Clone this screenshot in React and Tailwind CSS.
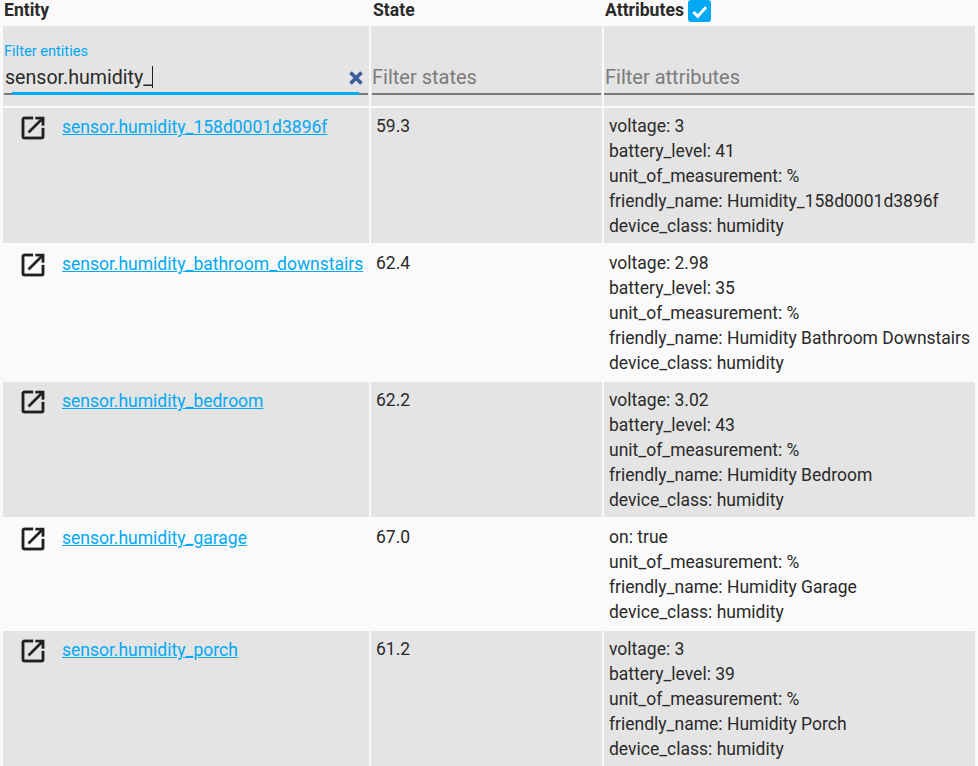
const rows = [
  { id: 'sensor.humidity_158d0001d3896f', state: '59.3', attrs: ['voltage: 3', 'battery_level: 41', 'unit_of_measurement: %', 'friendly_name: Humidity_158d0001d3896f', 'device_class: humidity'] },
  { id: 'sensor.humidity_bathroom_downstairs', state: '62.4', attrs: ['voltage: 2.98', 'battery_level: 35', 'unit_of_measurement: %', 'friendly_name: Humidity Bathroom Downstairs', 'device_class: humidity'] },
  { id: 'sensor.humidity_bedroom', state: '62.2', attrs: ['voltage: 3.02', 'battery_level: 43', 'unit_of_measurement: %', 'friendly_name: Humidity Bedroom', 'device_class: humidity'] },
  { id: 'sensor.humidity_garage', state: '67.0', attrs: ['on: true', 'unit_of_measurement: %', 'friendly_name: Humidity Garage', 'device_class: humidity'] },
  { id: 'sensor.humidity_porch', state: '61.2', attrs: ['voltage: 3', 'battery_level: 39', 'unit_of_measurement: %', 'friendly_name: Humidity Porch', 'device_class: humidity'] },
]

function OpenIcon() {
  return (
    <svg viewBox="0 0 24 24" className="w-[30px] h-[30px] -mt-[1px] shrink-0 fill-[#212121] stroke-[#212121] stroke-[0.25]">
      <path d="M14,3V5H17.59L7.76,14.83L9.17,16.24L19,6.41V10H21V3M19,19H5V5H12V3H5C3.89,3 3,3.9 3,5V19A2,2 0 0,0 5,21H19A2,2 0 0,0 21,19V12H19V19Z" />
    </svg>
  )
}

export default function App() {
  return (
    <div className="w-[978px] h-[766px] overflow-hidden bg-[#fafafa] text-[#2a2a2a] text-[17.5px] leading-[25px] font-['Roboto',sans-serif] pl-[3px]">
      <div className="grid grid-cols-[366px_231px_371px] gap-x-[2px]">
        {/* Header */}
        <div className="h-[26px] pl-[1px] font-bold text-[17.6px] leading-[21px]">Entity</div>
        <div className="h-[26px] pl-[2px] font-bold text-[17.6px] leading-[21px]">State</div>
        <div className="h-[26px] pl-[1px] font-bold text-[17.6px] leading-[21px] flex gap-[4px]">
          Attributes
          <span className="w-[23px] h-[22px] rounded-[3px] bg-[#03a9f4] flex items-center justify-center">
            <svg viewBox="0 0 24 24" className="w-[21px] h-[21px] fill-none stroke-white stroke-[3.4]">
              <path d="M5 12.5l5 5L19.5 7" />
            </svg>
          </span>
        </div>

        {/* Filters */}
        <div className="h-[80px] bg-[#e4e4e4] pt-[16px] relative">
          <div className="pl-[1px] text-[#03a9f4] text-[14.6px] leading-[18px]">Filter entities</div>
          <div className="pl-[2px] mt-[2px] h-[30px] text-[19.6px] leading-[31px] flex items-center">
            sensor.humidity_<span className="w-px h-[22px] bg-[#212121]" />
          </div>
          <div className="mt-[1px] mx-[1px] h-[2px] bg-[#7a7a7a]" />
          <div className="absolute left-[9px] w-[347px] top-[66px] h-[3px] bg-[#03a9f4]" />
          <svg viewBox="0 0 24 24" className="absolute right-[2px] top-[41px] w-[22px] h-[22px] fill-none stroke-[#3b5c9a] stroke-[4]">
            <path d="M6 6l12 12M18 6L6 18" />
          </svg>
        </div>
        <div className="h-[80px] bg-[#e4e4e4] pt-[36px] flex flex-col">
          <div className="pl-[1px] h-[31px] text-[20px] leading-[30px] text-[#7b7b7b]">Filter states</div>
          <div className="mx-[1px] h-[2px] bg-[#7a7a7a]" />
        </div>
        <div className="h-[80px] bg-[#e4e4e4] pt-[36px] flex flex-col">
          <div className="pl-[1px] h-[31px] text-[20px] leading-[30px] text-[#7b7b7b]">Filter attributes</div>
          <div className="mr-[1px] h-[2px] bg-[#7a7a7a]" />
        </div>

        {/* Rows */}
        {rows.map((r, i) => {
          const bg = i % 2 === 0 ? 'bg-[#e4e4e4]' : 'bg-[#fafafa]'
          return (
            <div key={r.id} className="contents">
              <div className={`${bg} mt-[2px] pt-[6px] pb-[4px] pl-[15px] flex items-start gap-[14px]`}>
                <OpenIcon />
                <a href="#" className="text-[#03a9f4] underline mt-[1px]">{r.id}</a>
              </div>
              <div className={`${bg} mt-[2px] pt-[6px] pb-[4px] pl-[5px]`}>{r.state}</div>
              <div className={`${bg} mt-[2px] pt-[6px] pb-[4px] pl-[5px]`}>
                {r.attrs.map((a) => (
                  <div key={a}>{a}</div>
                ))}
              </div>
            </div>
          )
        })}
      </div>
    </div>
  )
}
